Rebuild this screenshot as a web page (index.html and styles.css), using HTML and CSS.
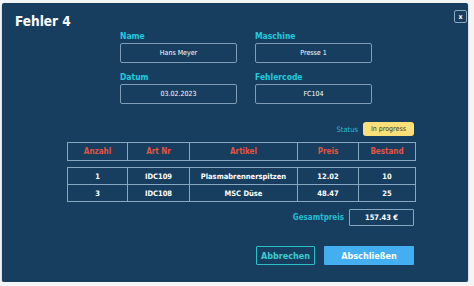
FILE: index.html
```html
<!DOCTYPE html>
<html lang="de">
<head>
    <meta charset="UTF-8">
    <meta name="viewport" content="width=device-width, initial-scale=1.0">
    <title>Fehler 4</title>
    <link rel="stylesheet" href="styles.css">
</head>
<body>
    <div class="dialog">
        <div class="dialog-head">
            <h1 class="title">Fehler 4</h1>
            <button class="close">x</button>
        </div>

        <div class="fields">
            <div class="field">
                <label>Name</label>
                <div class="input">Hans Meyer</div>
            </div>
            <div class="field">
                <label>Maschine</label>
                <div class="input">Presse 1</div>
            </div>
            <div class="field">
                <label>Datum</label>
                <div class="input">03.02.2023</div>
            </div>
            <div class="field">
                <label>Fehlercode</label>
                <div class="input">FC104</div>
            </div>
        </div>

        <div class="content">
            <div class="status-row">
                <span class="status-label">Status</span>
                <span class="badge">In progress</span>
            </div>

            <table class="grid head">
                <tr>
                    <th class="c1">Anzahl</th>
                    <th class="c2">Art Nr</th>
                    <th class="c3">Artikel</th>
                    <th class="c4">Preis</th>
                    <th class="c5">Bestand</th>
                </tr>
            </table>

            <table class="grid body">
                <tr>
                    <td class="c1">1</td>
                    <td class="c2">IDC109</td>
                    <td class="c3">Plasmabrennerspitzen</td>
                    <td class="c4">12.02</td>
                    <td class="c5">10</td>
                </tr>
                <tr>
                    <td class="c1">3</td>
                    <td class="c2">IDC108</td>
                    <td class="c3">MSC Düse</td>
                    <td class="c4">48.47</td>
                    <td class="c5">25</td>
                </tr>
            </table>

            <div class="total-row">
                <span class="total-label">Gesamtpreis</span>
                <span class="total">157.43 €</span>
            </div>

            <div class="actions">
                <button class="btn cancel">Abbrechen</button>
                <button class="btn confirm">Abschließen</button>
            </div>
        </div>
    </div>
</body>
</html>
```

FILE: styles.css
```css
body {
    margin: 0;
    background-color: #f3f5f7;
    font-family: "DejaVu Sans Condensed", "DejaVu Sans", sans-serif;
}

.dialog {
    width: 466px;
    height: 279px;
    margin: 3px 0 0 2px;
    box-sizing: border-box;
    padding: 7px 1px 0 13px;
    background-color: #173e5f;
    border-radius: 2px;
    box-shadow: 0 1px 2px rgba(0, 0, 0, 0.3);
    color: white;
}

.dialog-head {
    display: flex;
    justify-content: space-between;
    align-items: flex-start;
    height: 20px;
}

.title {
    margin: 2px 0 0;
    font-size: 13.5px;
    line-height: 18px;
    font-weight: bold;
}

.close {
    width: 13px;
    height: 13px;
    padding: 0;
    border: 1px solid #8ba6bd;
    border-radius: 2px;
    background: transparent;
    color: white;
    font-family: inherit;
    font-size: 7px;
    font-weight: bold;
    line-height: 10px;
}

.fields {
    display: grid;
    grid-template-columns: 117px 117px;
    column-gap: 18px;
    row-gap: 9px;
    margin: 1px 0 0 105px;
}

.field label {
    display: block;
    height: 11px;
    margin-bottom: 1px;
    color: #22cbdb;
    font-size: 8.5px;
    line-height: 11px;
    font-weight: bold;
}

.input {
    height: 20px;
    box-sizing: border-box;
    border: 1px solid #7f9db6;
    border-radius: 2px;
    text-align: center;
    font-size: 7px;
    line-height: 18px;
}

.content {
    width: 348px;
    margin-left: 52px;
}

.status-row {
    display: flex;
    justify-content: flex-end;
    align-items: center;
    gap: 5px;
    height: 14px;
    margin-top: 18px;
    padding-right: 1px;
}

.status-label {
    color: #22bdd0;
    font-size: 7.5px;
}

.badge {
    width: 51px;
    height: 14px;
    border-radius: 3px;
    background-color: #fbe07a;
    color: #3a3a2a;
    text-align: center;
    font-size: 7px;
    line-height: 14px;
}

.grid {
    width: 348px;
    border-collapse: collapse;
    table-layout: fixed;
}

.grid th,
.grid td {
    padding: 0;
    border: 1px solid #87a8c3;
    text-align: center;
    font-weight: bold;
}

.grid .c1 { width: 59px; }
.grid .c2 { width: 61px; }
.grid .c3 { width: 107px; }
.grid .c4 { width: 60px; }
.grid .c5 { width: 56px; }

.head {
    margin-top: 6px;
}

.head th {
    height: 17px;
    color: #e2553f;
    font-size: 8px;
}

.body {
    margin-top: 6px;
}

.body td {
    height: 16px;
    font-size: 7.5px;
}

.total-row {
    display: flex;
    justify-content: flex-end;
    align-items: center;
    gap: 5px;
    margin-top: 7px;
    padding-right: 1px;
}

.total-label {
    color: #22bdd0;
    font-size: 8px;
    font-weight: bold;
}

.total {
    width: 65px;
    height: 17px;
    box-sizing: border-box;
    border: 1px solid #87a8c3;
    border-radius: 1px;
    text-align: center;
    font-size: 7.5px;
    font-weight: bold;
    line-height: 15px;
}

.actions {
    display: flex;
    justify-content: flex-end;
    gap: 9px;
    margin-top: 20px;
    padding-right: 1px;
}

.btn {
    height: 19px;
    padding: 0;
    border-radius: 1px;
    font-family: inherit;
    font-size: 9px;
    font-weight: bold;
}

.cancel {
    width: 59px;
    border: 1.5px solid #2bbfc6;
    background: transparent;
    color: #3ccbd0;
}

.confirm {
    width: 90px;
    border: none;
    background-color: #43aff0;
    color: white;
}
```
